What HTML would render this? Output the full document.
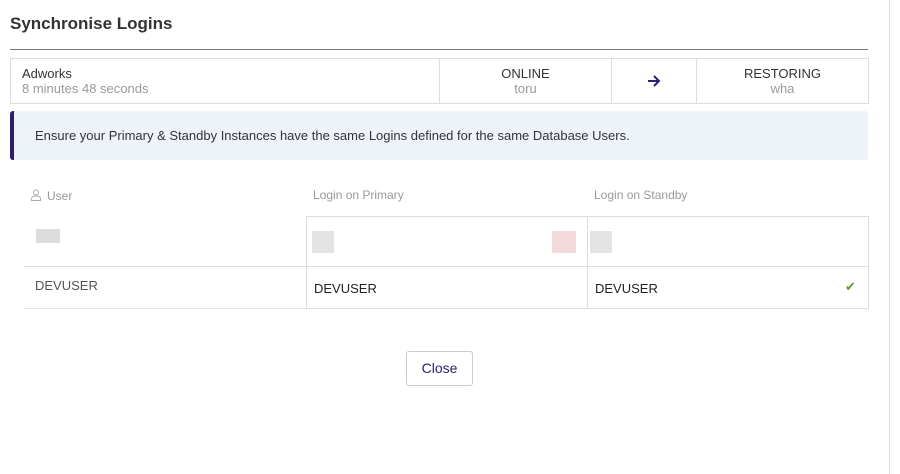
<!DOCTYPE html>
<html><head><style>
body{margin:0;width:900px;height:474px;background:#fff;font-family:"Liberation Sans",sans-serif;position:relative;overflow:hidden;color:#222}
.a{position:absolute}
</style></head><body>
<div class="a" style="left:889px;top:0;width:1px;height:474px;background:#ddd"></div>
<div class="a" style="left:10px;top:14px;font-size:17px;font-weight:bold;color:#333">Synchronise Logins</div>
<div class="a" style="left:10px;top:49px;width:858px;height:1px;background:#777"></div>
<div class="a" style="left:10px;top:58px;width:857px;height:44px;border:1px solid #ddd"></div>
<div class="a" style="left:439px;top:58px;width:1px;height:46px;background:#ddd"></div>
<div class="a" style="left:611px;top:58px;width:1px;height:46px;background:#ddd"></div>
<div class="a" style="left:696px;top:58px;width:1px;height:46px;background:#ddd"></div>
<div class="a" style="left:22px;top:66px;font-size:13px;color:#333">Adworks</div>
<div class="a" style="left:22px;top:81px;font-size:13px;color:#999">8 minutes 48 seconds</div>
<div class="a" style="left:440px;top:66px;width:171px;text-align:center;font-size:13px;color:#333">ONLINE</div>
<div class="a" style="left:440px;top:81px;width:171px;text-align:center;font-size:13px;color:#999">toru</div>
<svg class="a" style="left:647px;top:74px" width="14" height="14" viewBox="0 0 14 14"><path d="M1 7H12M7 2L12 7L7 12" stroke="#2d1f6e" stroke-width="2" fill="none"/></svg>
<div class="a" style="left:697px;top:66px;width:171px;text-align:center;font-size:13px;color:#333">RESTORING</div>
<div class="a" style="left:697px;top:81px;width:171px;text-align:center;font-size:13px;color:#999">wha</div>
<div class="a" style="left:10px;top:111px;width:854px;height:49px;background:#eef3fa;border-left:4px solid #2d1f6e;border-radius:3px"></div>
<div class="a" style="left:35px;top:128px;font-size:13px;color:#333">Ensure your Primary &amp; Standby Instances have the same Logins defined for the same Database Users.</div>
<svg class="a" style="left:31px;top:189px" width="10" height="12" viewBox="0 0 10 12"><circle cx="5" cy="3.5" r="2.5" stroke="#aaa" fill="none"/><path d="M0.5 11.5V10a3 3 0 0 1 3-3h3a3 3 0 0 1 3 3v1.5z" stroke="#aaa" fill="none"/></svg>
<div class="a" style="left:47px;top:189px;font-size:12px;color:#999">User</div>
<div class="a" style="left:313px;top:188px;font-size:12px;color:#999">Login on Primary</div>
<div class="a" style="left:594px;top:188px;font-size:12px;color:#999">Login on Standby</div>
<div class="a" style="left:306px;top:216px;width:561px;height:91px;border:1px solid #ddd"></div>
<div class="a" style="left:587px;top:216px;width:1px;height:92px;background:#ddd"></div>
<div class="a" style="left:24px;top:266px;width:844px;height:1px;background:#ddd"></div>
<div class="a" style="left:24px;top:308px;width:282px;height:1px;background:#e6e6e6"></div>
<div class="a" style="left:36px;top:229px;width:24px;height:14px;background:#ddd"></div>
<div class="a" style="left:312px;top:231px;width:22px;height:22px;background:#e4e4e4"></div>
<div class="a" style="left:552px;top:231px;width:24px;height:22px;background:#f3d9dc"></div>
<div class="a" style="left:590px;top:231px;width:22px;height:22px;background:#e4e4e4"></div>
<div class="a" style="left:35px;top:278px;font-size:13px;color:#555">DEVUSER</div>
<div class="a" style="left:314px;top:281px;font-size:13px;color:#222">DEVUSER</div>
<div class="a" style="left:595px;top:281px;font-size:13px;color:#222">DEVUSER</div>
<div class="a" style="left:845px;top:279px;font-size:13px;color:#5a9e2e">✔</div>
<div class="a" style="left:406px;top:351px;width:65px;height:33px;border:1px solid #ccc;border-radius:3px;text-align:center;line-height:33px;font-size:14px;color:#2d1f6e">Close</div>
</body></html>
